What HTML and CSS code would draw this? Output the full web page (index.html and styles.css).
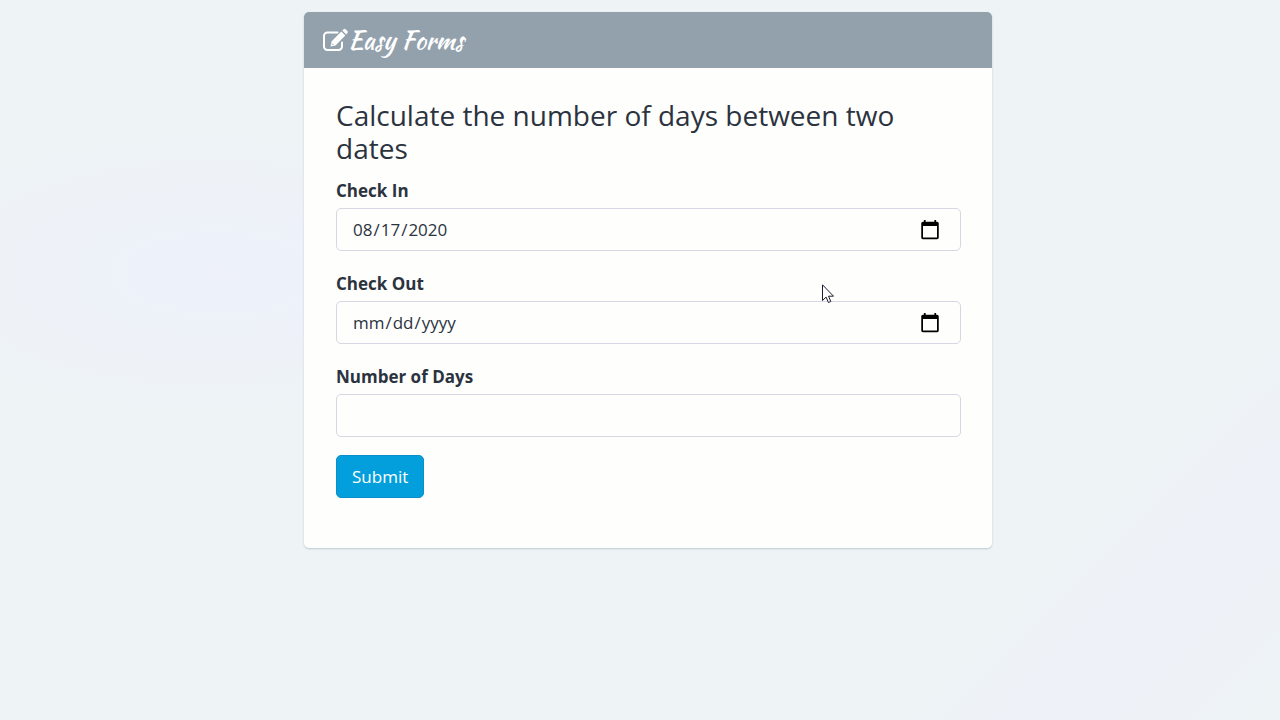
FILE: index.html
```html
<!DOCTYPE html>
<html lang="en-US">

<head>
    <meta charset="UTF-8">
    <meta name="viewport" content="width=device-width, initial-scale=1.0">
    <title>Easy Forms</title>
    <link rel="stylesheet" href="styles.css">
</head>

<body>
    <div class="page">
        <main class="card">
            <header class="card-header">
                <svg class="brand-icon" viewBox="0 0 26 24" aria-hidden="true">
                    <path d="M15.500 4.500H5.500A3.500 3.500 0 0 0 2 8v10.500a3.500 3.500 0 0 0 3.500 3.500h11a3.500 3.500 0 0 0 3.500-3.500v-4" fill="none" stroke="currentColor" stroke-width="2" stroke-linecap="round"/>
                    <path d="M8.500 18.500l1-5L19.300 3.500l4 4L13.500 17.500zM20.300 2.500l1.300-1.300q1-.8 2 0l1.800 1.900q.8 1 0 1.900l-1.200 1.400z" fill="currentColor"/>
                    <path d="M10 15.600l1.500 1.500" stroke="#93a1ad" stroke-width="1" fill="none"/>
                </svg>
                <span class="brand">Easy Forms</span>
            </header>

            <form class="card-body">
                <h1>Calculate the number of days between two dates</h1>

                <div class="form-group">
                    <label for="check-in">Check In</label>
                    <input type="date" id="check-in" value="2020-08-17">
                </div>
                <div class="form-group">
                    <label for="check-out">Check Out</label>
                    <input type="date" id="check-out">
                </div>
                <div class="form-group">
                    <label for="days">Number of Days</label>
                    <input type="text" id="days">
                </div>

                <button type="submit">Submit</button>
            </form>
        </main>
    </div>

    <svg class="cursor" viewBox="0 0 12 20" aria-hidden="true">
        <path d="M.5.8v15.700l3.600-3.400 2.300 5.400 2.400-1-2.300-5.300h5z" fill="#fff" stroke="#1c1c2b" stroke-width="1"/>
    </svg>

    <script>
        const checkIn = document.getElementById('check-in');
        const checkOut = document.getElementById('check-out');
        const days = document.getElementById('days');

        function updateDays() {
            if (checkIn.value && checkOut.value) {
                const diff = new Date(checkOut.value) - new Date(checkIn.value);
                days.value = Math.round(diff / 86400000);
            } else {
                days.value = '';
            }
        }

        checkIn.addEventListener('change', updateDays);
        checkOut.addEventListener('change', updateDays);
    </script>
</body>

</html>
```

FILE: styles.css
```css
* {
    box-sizing: border-box;
}

body {
    margin: 0;
    min-height: 100vh;
    background-color: #eef3f6;
    background-image:
        radial-gradient(ellipse at 17% 38%, rgba(237, 240, 251, 0.7), transparent 24%),
        linear-gradient(135deg, transparent 80%, rgba(237, 240, 250, 0.5) 88%, transparent);
    color: #2b333e;
    font-family: "Segoe UI", "Open Sans", "Noto Sans", sans-serif;
    font-size: 17px;
    line-height: 27px;
}

.page {
    padding: 12px 0 12px 16px;
}

.card {
    max-width: 688px;
    margin: 0 auto;
    background-color: #fefefd;
    border-radius: 5px;
    box-shadow: 0 1px 2px rgba(80, 110, 130, 0.3);
    overflow: hidden;
}

.card-header {
    display: flex;
    align-items: center;
    height: 56px;
    padding: 0 18px;
    background-color: #93a1ad;
    color: #fff;
}

.brand-icon {
    width: 26px;
    height: 24px;
}

.brand {
    font-family: "Kaushan Script", Lato, cursive;
    font-size: 25px;
}

.card-body {
    padding: 31px 31px 50px 32px;
}

h1 {
    margin: 0 0 12px;
    font-size: 28px;
    font-weight: 400;
    line-height: 33px;
}

.form-group {
    margin-bottom: 19px;
}

.form-group:last-of-type {
    margin-bottom: 18px;
}

label {
    display: block;
    margin-bottom: 4px;
    font-weight: 700;
}

input {
    display: block;
    width: 100%;
    height: 43px;
    padding: 0 15px;
    border: 1px solid #d5d7e3;
    border-radius: 5px;
    background-color: #fefefd;
    color: #2b333e;
    font: inherit;
}

input::-webkit-calendar-picker-indicator {
    width: 22px;
    height: 22px;
    padding: 0 2px;
    margin-right: 2px;
    background-size: contain;
}

button {
    height: 43px;
    padding: 0 15px;
    border: 1px solid #0a8fc9;
    border-radius: 5px;
    background-color: #039fdc;
    color: #fff;
    font: inherit;
    cursor: pointer;
}

/* pointer floats over the form */
.cursor {
    position: absolute;
    top: 284px;
    left: 822px;
    width: 12px;
    height: 20px;
}
```
